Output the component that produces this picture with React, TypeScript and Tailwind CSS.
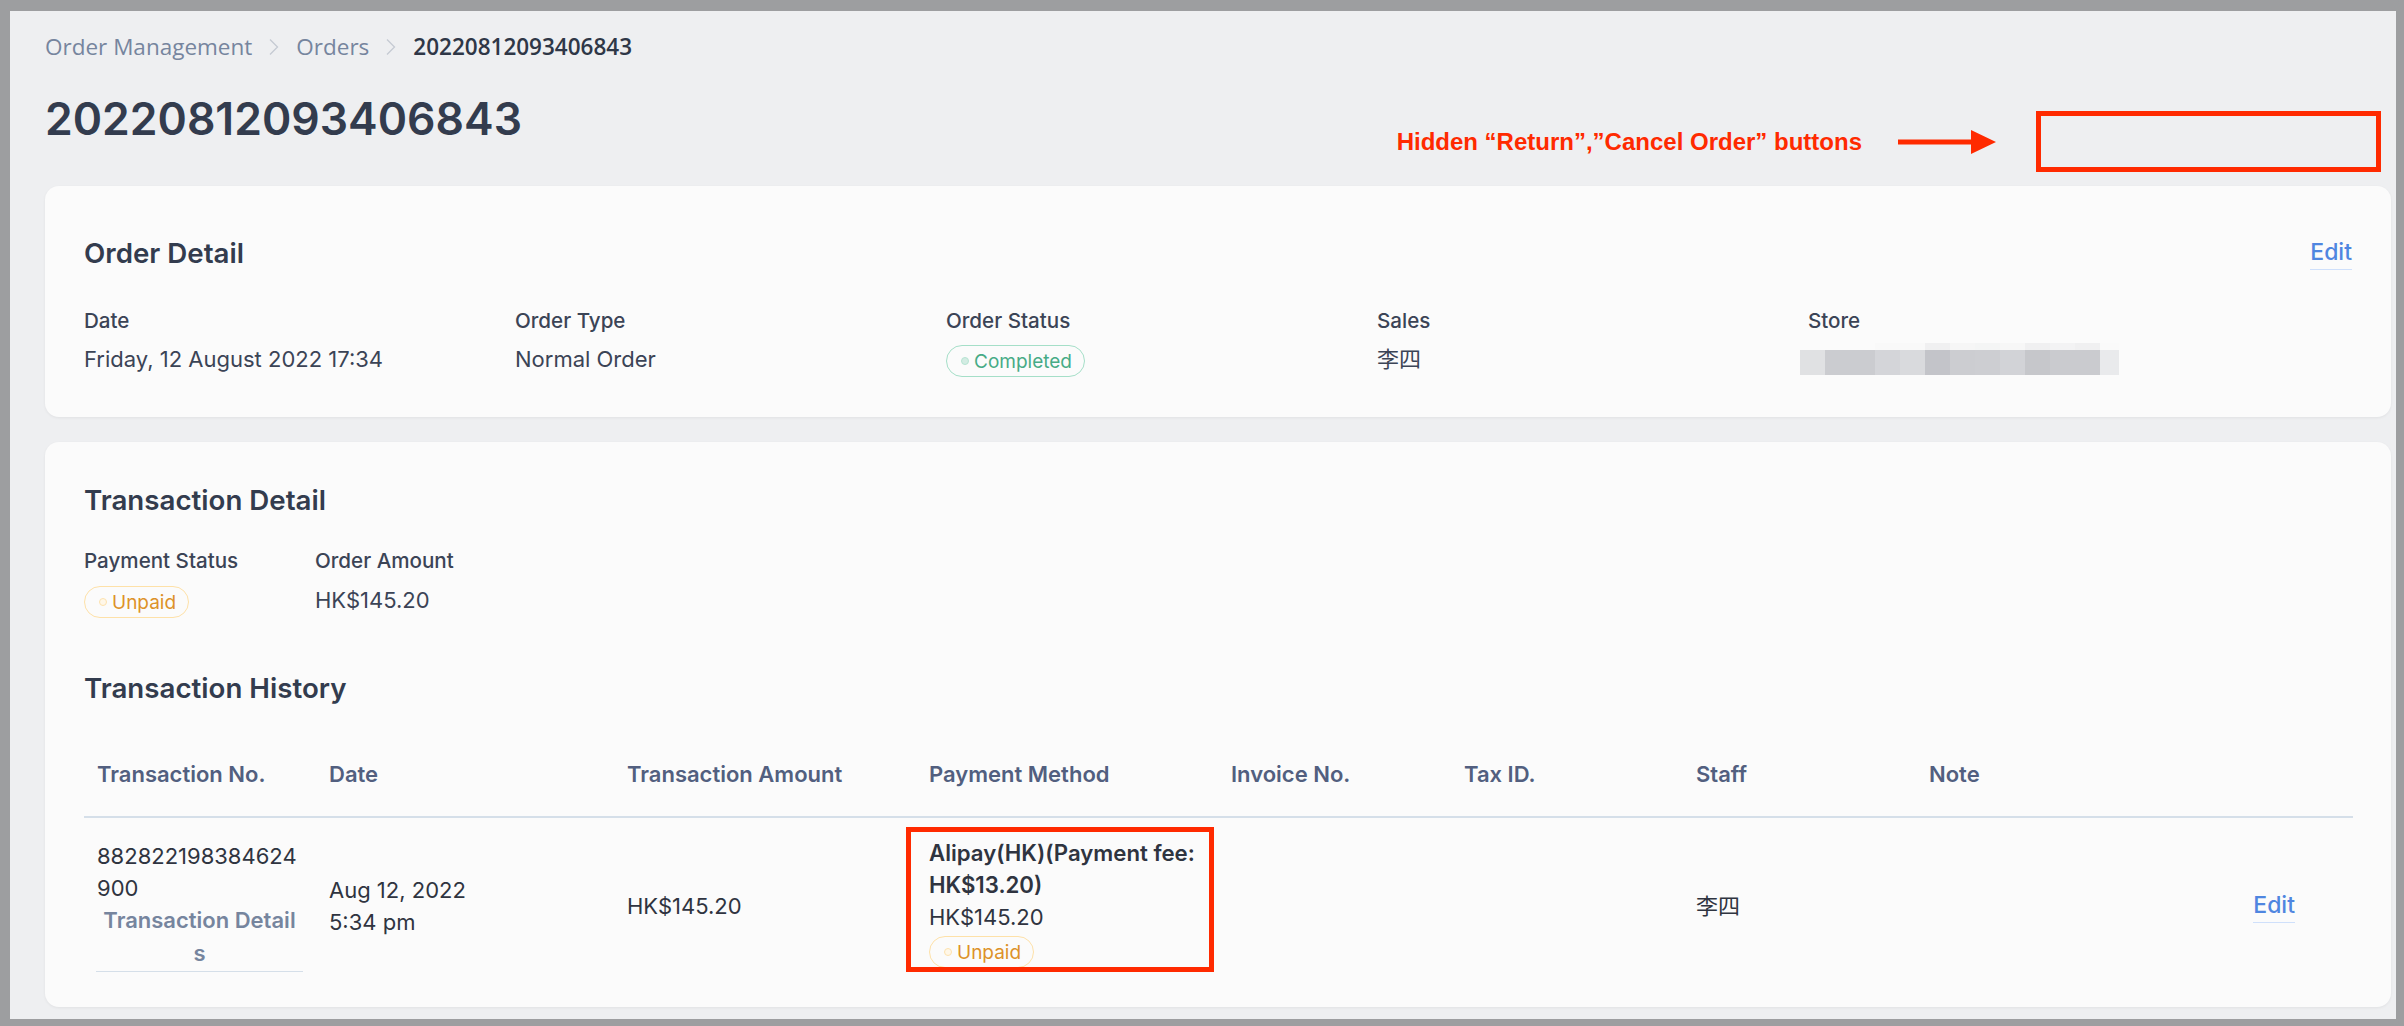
const inter = "font-['Inter','Noto_Sans_CJK_SC',sans-serif]";

function Badge({ color, label }: { color: "amber" | "green"; label: string }) {
  const amber = color === "amber";
  return (
    <span
      className={`inline-flex h-[32px] items-center rounded-full border pl-[14px] pr-[12px] text-[19px] leading-none ${
        amber ? "border-[#fee1a8] text-[#dd9229]" : "border-[#a5dfc8] text-[#47ab86]"
      }`}
    >
      <span
        className={`mr-[5px] h-[8px] w-[8px] rounded-full border ${
          amber ? "border-[#fde2ad] bg-[#fff7e8]" : "border-[#b6e4d2] bg-[#d3ece3]"
        }`}
      />
      {label}
    </span>
  );
}

function EditLink() {
  return (
    <span className="inline-block border-b border-[#cfe0fb] pb-[2px] text-[23px] font-medium leading-[30px] text-[#4f86e0]">
      Edit
    </span>
  );
}

function Field({ label, children }: { label: string; children: React.ReactNode }) {
  return (
    <div className="w-[431px]">
      <div className="text-[20.6px] font-medium leading-[32px] text-[#3b4456]">{label}</div>
      <div className="mt-[6px] text-[22px] leading-[32px] text-[#3b4456]">{children}</div>
    </div>
  );
}

const blur = ["#e0e1e3", "#cbccd0", "#cbccd0", "#d4d5d9", "#d9dadd", "#c3c4c9", "#cccdd1", "#cdced2", "#d2d3d7", "#c6c7cb", "#cacbcf", "#cacbcf", "#e9eaec"];
const blurTop = ["#fbfbfb", "#fbfbfb", "#fbfbfb", "#f9f9f9", "#f9f9f9", "#f0f0f1", "#f6f6f6", "#f4f5f5", "#f7f7f7", "#f0f0f1", "#f3f3f4", "#f0f0f1", "#fafafa"];

function Blurred() {
  return (
    <div className="ml-[-8px] mt-[4px]">
      <div className="flex h-[7px]">
        {blurTop.map((c, i) => (
          <div key={i} className={i === 12 ? "w-[19px]" : "w-[25px]"} style={{ background: c }} />
        ))}
      </div>
      <div className="flex h-[25px]">
        {blur.map((c, i) => (
          <div key={i} className={i === 12 ? "w-[19px]" : "w-[25px]"} style={{ background: c }} />
        ))}
      </div>
    </div>
  );
}

function Chevron() {
  return (
    <svg className="mx-[13px] h-[18px] w-[18px] text-[#c5cad3]" viewBox="0 0 18 18" fill="none" stroke="currentColor" strokeWidth="1.3">
      <path d="M5 1.5 12.5 9 5 16.5" />
    </svg>
  );
}

const heads: [string, string][] = [
  ["Transaction No.", "w-[232px]"],
  ["Date", "w-[298px]"],
  ["Transaction Amount", "w-[302px]"],
  ["Payment Method", "w-[302px]"],
  ["Invoice No.", "w-[233px]"],
  ["Tax ID.", "w-[232px]"],
  ["Staff", "w-[233px]"],
  ["Note", "w-[232px]"],
];

export default function App() {
  return (
    <div className={`${inter} h-[1026px] w-[2404px] overflow-hidden bg-[#9d9ea0] pb-[7px] pl-[10px] pr-[8px] pt-[11px]`}>
      <div className="h-full bg-[#eeeff1] pl-[35px] pr-[5px] pt-[20px]">
        <nav className="flex h-[32px] items-center font-['Open_Sans',sans-serif] text-[22.5px] leading-[32px] text-[#76859e]">
          <span>Order Management</span>
          <Chevron />
          <span>Orders</span>
          <Chevron />
          <span className="font-semibold text-[#2f3747]">20220812093406843</span>
        </nav>

        <header className="flex h-[123px] items-start">
          <h1 className="mt-[28px] text-[44.5px] font-semibold leading-[56px] text-[#333c4e]">20220812093406843</h1>
          <div className="ml-auto mr-[10px] mt-[48px] flex items-center">
            <span className="font-['Liberation_Sans',sans-serif] text-[24px] font-bold text-[#ff2a00]">
              Hidden “Return”,”Cancel Order” buttons
            </span>
            <svg className="ml-[36px] mr-[40px] h-[24px] w-[98px]" viewBox="0 0 98 24">
              <path d="M0 9.5h73V0l25 12-25 12v-9.5H0z" fill="#ff2a00" />
            </svg>
            <div className="h-[61px] w-[345px] border-[5px] border-[#ff2a00]" />
          </div>
        </header>

        <section className="h-[231px] rounded-[14px] bg-[#fbfbfb] pl-[39px] pr-[39px] pt-[48px] shadow-[0_1px_3px_rgba(0,0,0,0.06)]">
          <div className="flex items-start justify-between">
            <h2 className="text-[27.7px] font-semibold leading-[38px] text-[#333c4e]">Order Detail</h2>
            <div className="mt-[3px]">
              <EditLink />
            </div>
          </div>
          <div className="mt-[33px] flex">
            <Field label="Date">Friday, 12 August 2022 17:34</Field>
            <Field label="Order Type">Normal Order</Field>
            <Field label="Order Status">
              <div className="-mt-[2px]">
                <Badge color="green" label="Completed" />
              </div>
            </Field>
            <Field label="Sales">李四</Field>
            <Field label="Store">
              <Blurred />
            </Field>
          </div>
        </section>

        <section className="mt-[25px] h-[565px] rounded-[14px] bg-[#fbfbfb] pl-[39px] pr-[38px] pt-[39px] shadow-[0_1px_3px_rgba(0,0,0,0.06)]">
          <h2 className="text-[27.7px] font-semibold leading-[38px] text-[#333c4e]">Transaction Detail</h2>
          <div className="mt-[26px] flex">
            <div className="w-[231px]">
              <div className="text-[20.6px] font-medium leading-[32px] text-[#3b4456]">Payment Status</div>
              <div className="mt-[9px]">
                <Badge color="amber" label="Unpaid" />
              </div>
            </div>
            <div>
              <div className="text-[20.6px] font-medium leading-[32px] text-[#3b4456]">Order Amount</div>
              <div className="mt-[7px] text-[22px] leading-[32px] text-[#3b4456]">HK$145.20</div>
            </div>
          </div>
          <h2 className="mt-[51px] text-[27.7px] font-semibold leading-[38px] text-[#333c4e]">Transaction History</h2>

          <div className="mt-[45px] flex h-[66px] items-start border-b-2 border-[#d5dfe9] pt-[6px]">
            {heads.map(([t, w]) => (
              <div key={t} className={`${w} px-[13px] text-[22px] font-semibold leading-[32px] text-[#525f7f]`}>
                {t}
              </div>
            ))}
          </div>

          <div className="flex h-[176px] items-center text-[22px] leading-[32px] text-[#2f3440]">
            <div className="w-[232px] pl-[12px]">
              <div className="w-[207px]">
                <div className="break-all pl-[1px]">882822198384624900</div>
                <div className="break-all border-b border-[#d5dfe9] px-[5px] pb-[1px] text-center font-semibold leading-[33px] text-[#76859e]">
                  Transaction Details
                </div>
              </div>
            </div>
            <div className="w-[298px] px-[13px]">
              Aug 12, 2022
              <br />
              5:34 pm
            </div>
            <div className="w-[302px] px-[13px]">HK$145.20</div>
            <div className="w-[302px] pb-[7px]">
              <div className="relative px-[13px]">
                <div className="text-[22.2px] font-semibold">
                  Alipay(HK)(Payment fee:
                  <br />
                  HK$13.20)
                </div>
                <div>HK$145.20</div>
                <div className="mt-[3px] flex">
                  <Badge color="amber" label="Unpaid" />
                </div>
                <div className="absolute left-[-10px] top-[-10px] h-[145px] w-[308px] border-[5px] border-[#ff2a00]" />
              </div>
            </div>
            <div className="w-[233px]" />
            <div className="w-[232px]" />
            <div className="w-[233px] px-[13px]">李四</div>
            <div className="flex flex-1 justify-end pr-[58px]">
              <EditLink />
            </div>
          </div>
        </section>
      </div>
    </div>
  );
}
